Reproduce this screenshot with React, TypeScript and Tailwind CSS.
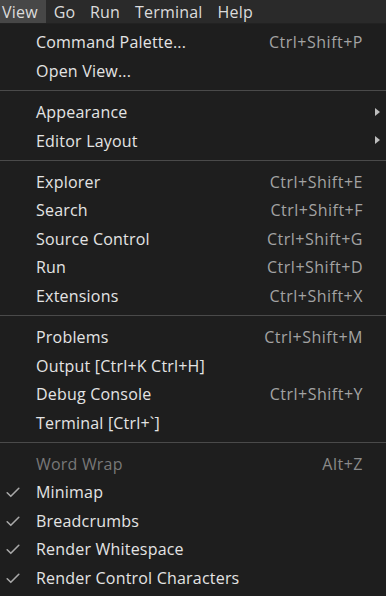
import React from "react";

type Item =
  | { kind: "sep" }
  | {
      kind: "item";
      label: string;
      shortcut?: string;
      sub?: boolean;
      checked?: boolean;
      disabled?: boolean;
    };

const items: Item[] = [
  { kind: "item", label: "Command Palette...", shortcut: "Ctrl+Shift+P" },
  { kind: "item", label: "Open View..." },
  { kind: "sep" },
  { kind: "item", label: "Appearance", sub: true },
  { kind: "item", label: "Editor Layout", sub: true },
  { kind: "sep" },
  { kind: "item", label: "Explorer", shortcut: "Ctrl+Shift+E" },
  { kind: "item", label: "Search", shortcut: "Ctrl+Shift+F" },
  { kind: "item", label: "Source Control", shortcut: "Ctrl+Shift+G" },
  { kind: "item", label: "Run", shortcut: "Ctrl+Shift+D" },
  { kind: "item", label: "Extensions", shortcut: "Ctrl+Shift+X" },
  { kind: "sep" },
  { kind: "item", label: "Problems", shortcut: "Ctrl+Shift+M" },
  { kind: "item", label: "Output [Ctrl+K Ctrl+H]" },
  { kind: "item", label: "Debug Console", shortcut: "Ctrl+Shift+Y" },
  { kind: "item", label: "Terminal [Ctrl+`]" },
  { kind: "sep" },
  { kind: "item", label: "Word Wrap", shortcut: "Alt+Z", disabled: true },
  { kind: "item", label: "Minimap", checked: true },
  { kind: "item", label: "Breadcrumbs", checked: true },
  { kind: "item", label: "Render Whitespace", checked: true },
  { kind: "item", label: "Render Control Characters", checked: true },
];

function Check() {
  return (
    <svg width="14" height="11" viewBox="0 0 14 11" className="block">
      <path
        d="M1.2 5.8 L4.8 9.3 L12.8 1.3"
        fill="none"
        stroke="#a9a9a9"
        strokeWidth="1.6"
        strokeLinecap="round"
        strokeLinejoin="round"
      />
    </svg>
  );
}

function Arrow() {
  return (
    <svg width="5" height="8" viewBox="0 0 5 8" className="block">
      <path d="M0 0 L5 4 L0 8 Z" fill="#bdbdbd" />
    </svg>
  );
}

export default function App() {
  return (
    <div
      className="w-[386px] h-[596px] overflow-hidden bg-[#1e1e1e] text-[16px] tracking-[0.2px]"
      style={{ fontFamily: '"Open Sans", "Noto Sans", sans-serif' }}
    >
      <div className="flex h-[24px] items-center bg-[#2a2a2a] text-[#dcdcdc] border-b border-[#222222]">
        <div className="flex h-full items-center bg-[#474747] pl-[2px] pr-[8px]">View</div>
        <div className="flex h-full items-center pl-[8px] pr-[7px]">Go</div>
        <div className="flex h-full items-center px-[7.5px]">Run</div>
        <div className="flex h-full items-center px-[7.5px]">Terminal</div>
        <div className="flex h-full items-center px-[7.5px]">Help</div>
      </div>
      <div className="flex flex-col pt-[4px]">
        {items.map((it, i) =>
          it.kind === "sep" ? (
            <div key={i} className="pt-[5px] pb-[6.75px]">
              <div className="h-px bg-[#4a4a4a]" />
            </div>
          ) : (
            <div key={i} className="relative flex h-[28.5px] items-center pl-[36px] pr-[23px]">
              {it.checked && (
                <div className="absolute left-[6px] top-[9px]">
                  <Check />
                </div>
              )}
              <span className={it.disabled ? "text-[#787878]" : "text-[#e4e4e4]"}>{it.label}</span>
              <span className="flex-1" />
              {it.shortcut && (
                <span
                  className={
                    "tracking-[0.5px] " + (it.disabled ? "text-[#8a8a8a]" : "text-[#a3a3a3]")
                  }
                >
                  {it.shortcut}
                </span>
              )}
              {it.sub && (
                <div className="absolute right-[6px] top-[10px]">
                  <Arrow />
                </div>
              )}
            </div>
          )
        )}
      </div>
    </div>
  );
}
